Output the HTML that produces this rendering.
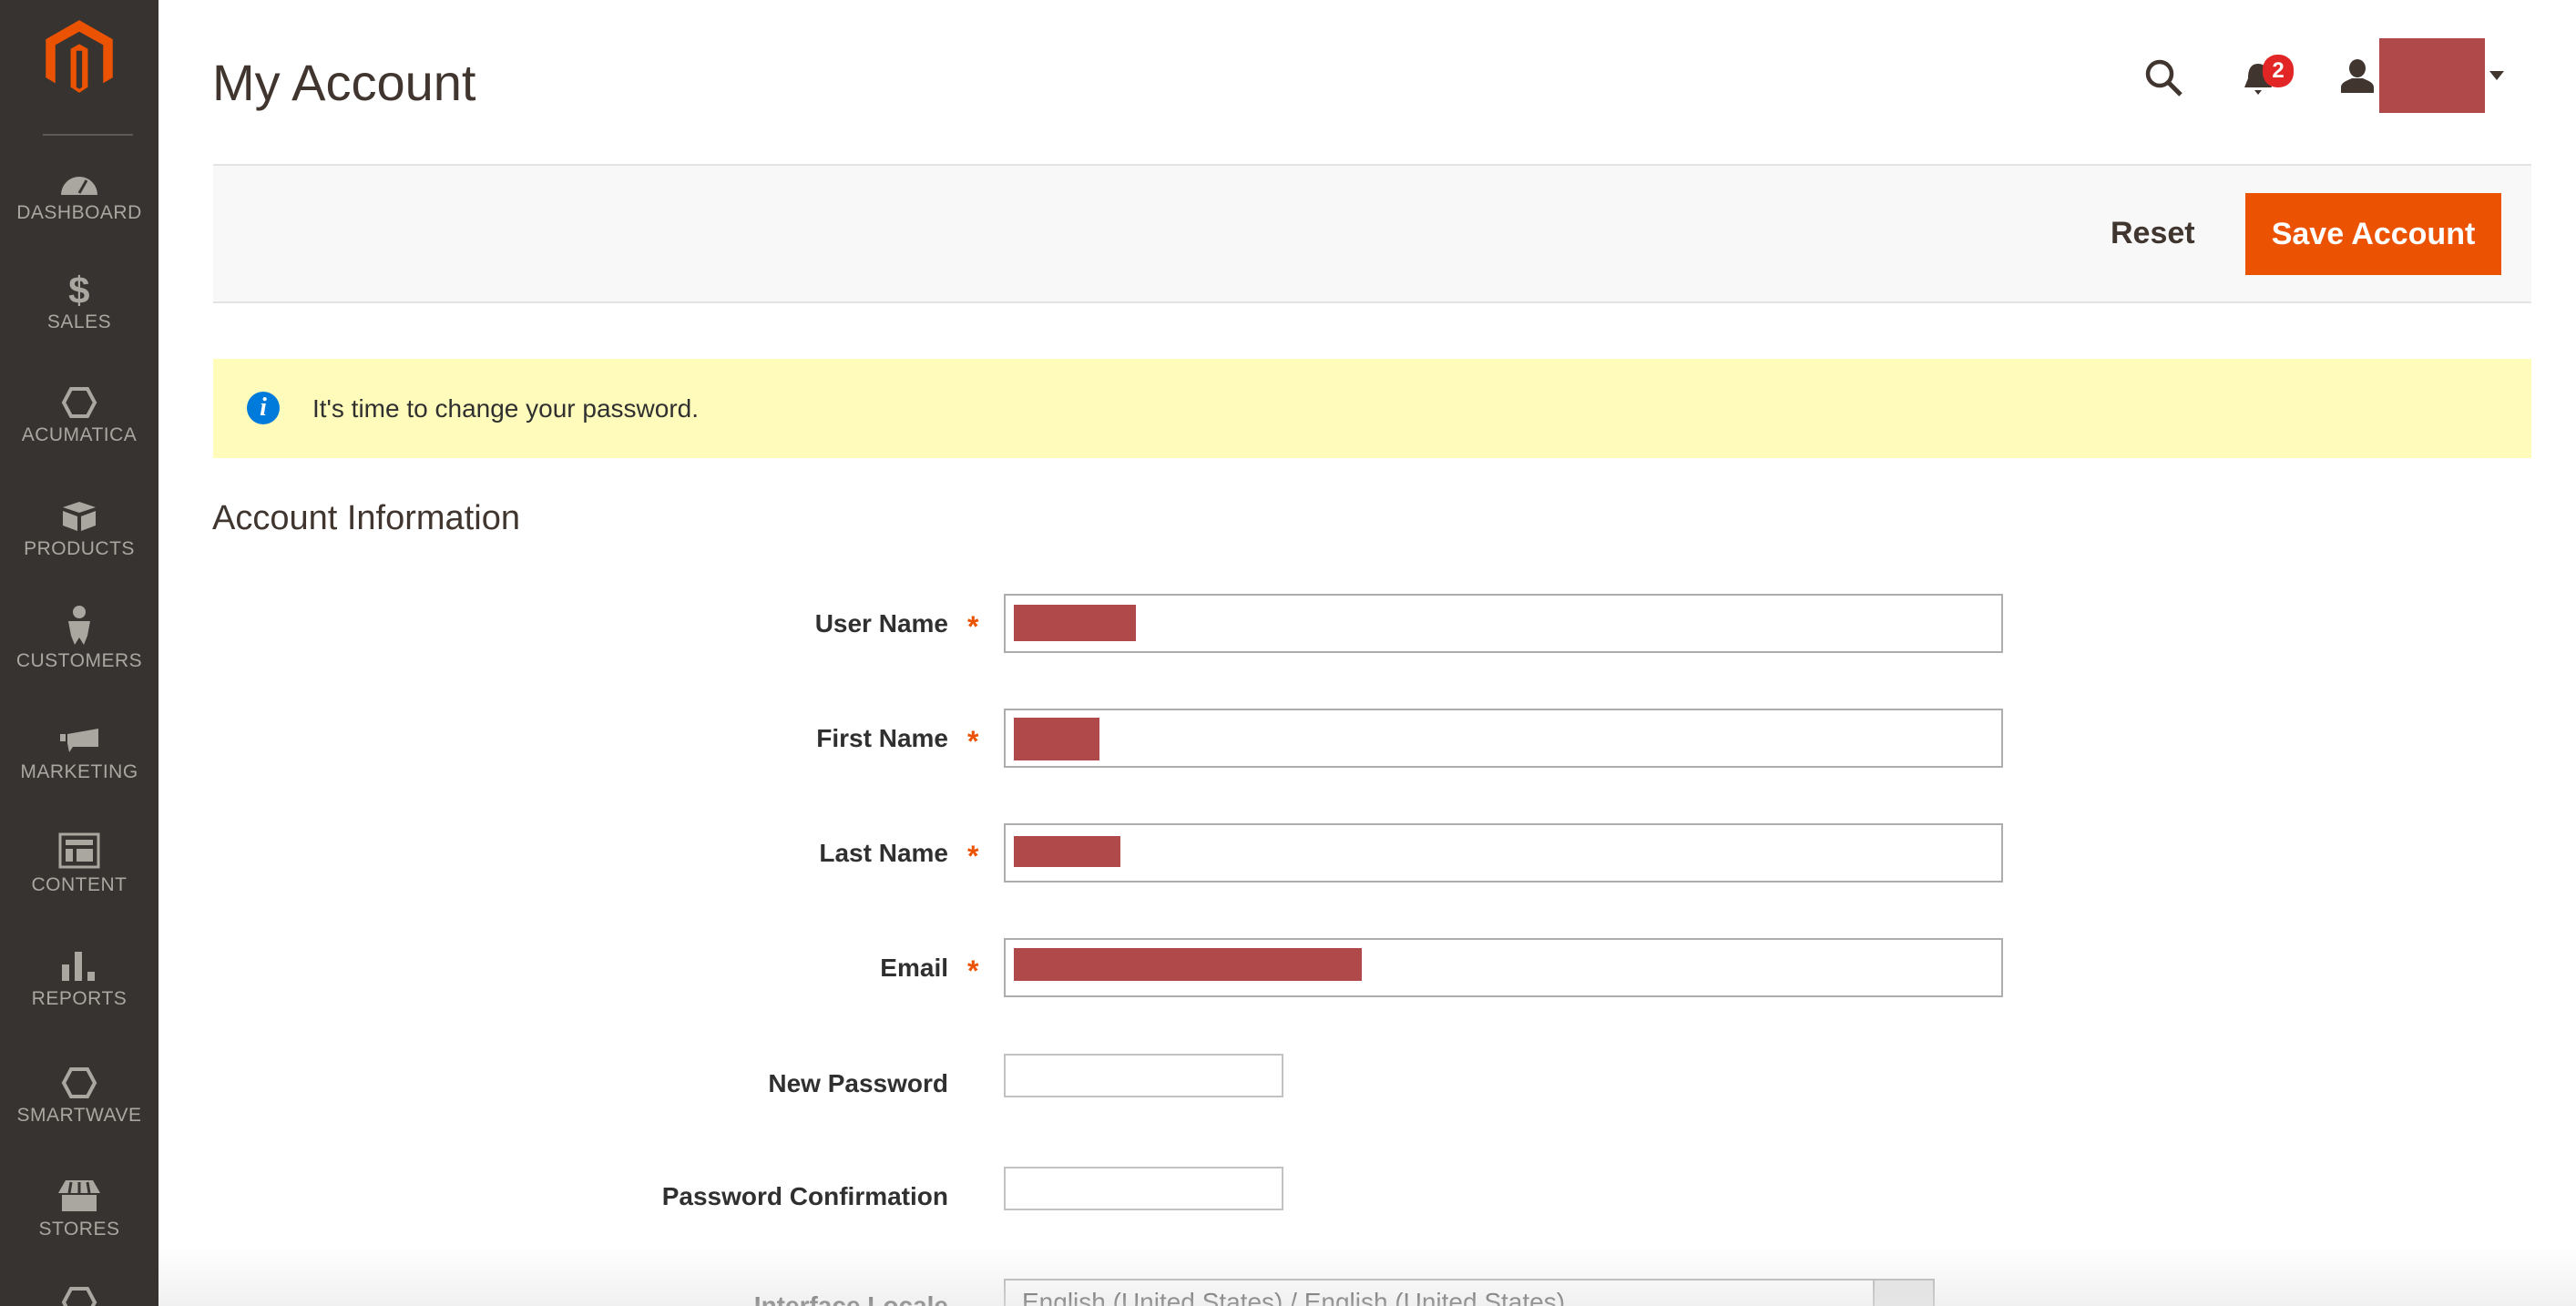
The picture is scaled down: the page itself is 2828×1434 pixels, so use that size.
<!DOCTYPE html>
<html style="width:2828px;height:1434px;overflow:hidden"><head><meta charset="utf-8"><style>
*{margin:0;padding:0;box-sizing:border-box}
body{width:2828px;height:1434px;overflow:hidden;background:#fff;font-family:"Liberation Sans",sans-serif;color:#303030;position:relative}
.a{position:absolute}
#side{left:0;top:0;width:174px;height:1434px;background:#373330;z-index:2;overflow:hidden}
.nav{position:absolute;left:0;width:174px;text-align:center;color:#aaa6a0;font-size:21px;letter-spacing:0.5px}
.nav svg{display:block;margin:0 auto 6px}
.lbl{position:absolute;right:1787px;font-size:28px;font-weight:bold;color:#303030;text-align:right;white-space:nowrap}
.ast{position:absolute;left:1062px;color:#eb5202;font-size:32px;font-weight:bold}
.inp{position:absolute;left:1102px;border:2px solid #adadad;background:#fff}
.red{position:absolute;background:#b04a4a}
</style></head><body>
<div id="side" class="a">
 <svg class="a" style="left:46px;top:20px" width="82" height="84" viewBox="0 0 78 80"><path d="M39 2 L74 22 L74 62 L64 68 L64 28 L39 14 L14 28 L14 68 L4 62 L4 22 Z" fill="#eb5202"/><path d="M30 32 L39 27 L48 32 L48 72 L39 78 L30 72 Z" fill="#eb5202"/><path d="M36 34 L36 72 L39 74 L42 72 L42 34 Z" fill="#373330"/></svg>
 <div class="a" style="left:47px;top:147px;width:99px;height:2px;background:#5e5955"></div>
 <div class="nav" style="top:186px"><svg width="46" height="30" viewBox="0 0 44 30"><path d="M2 28 A20 20 0 0 1 42 28 Z" fill="#aaa6a0"/><path d="M22 26 L30 12" stroke="#373330" stroke-width="3"/></svg>DASHBOARD</div>
 <div class="nav" style="top:298px"><div style="font-size:42px;font-weight:bold;line-height:42px;margin-bottom:2px">$</div>SALES</div>
 <div class="nav" style="top:424px"><svg width="40" height="36" viewBox="0 0 40 36"><path d="M11 3 H29 L37 18 L29 33 H11 L3 18 Z" fill="none" stroke="#aaa6a0" stroke-width="4"/></svg>ACUMATICA</div>
 <div class="nav" style="top:549px"><svg width="40" height="36" viewBox="0 0 40 36"><path d="M2 8 L20 2 L38 8 L20 14 Z M2 12 L18 18 L18 34 L2 28 Z M22 18 L38 12 L38 28 L22 34 Z" fill="#aaa6a0"/></svg>PRODUCTS</div>
 <div class="nav" style="top:664px"><svg width="30" height="44" viewBox="0 0 30 44"><circle cx="15" cy="8" r="7" fill="#aaa6a0"/><path d="M3 18 H27 L24 34 L20 44 L15 36 L10 44 L6 34 Z" fill="#aaa6a0"/></svg>CUSTOMERS</div>
 <div class="nav" style="top:796px"><svg width="46" height="34" viewBox="0 0 46 34"><path d="M2 10 H8 V18 H2 Z M10 10 L44 4 V24 L16 24 L12 30 L10 20 Z" fill="#aaa6a0"/></svg>MARKETING</div>
 <div class="nav" style="top:914px"><svg width="46" height="40" viewBox="0 0 46 40"><rect x="2" y="2" width="42" height="36" fill="none" stroke="#aaa6a0" stroke-width="3"/><rect x="8" y="8" width="30" height="6" fill="#aaa6a0"/><rect x="8" y="18" width="8" height="14" fill="#aaa6a0"/><rect x="20" y="18" width="18" height="14" fill="#aaa6a0"/></svg>CONTENT</div>
 <div class="nav" style="top:1039px"><svg width="46" height="40" viewBox="0 0 46 40"><rect x="4" y="20" width="8" height="18" fill="#aaa6a0"/><rect x="18" y="6" width="8" height="32" fill="#aaa6a0"/><rect x="32" y="28" width="8" height="10" fill="#aaa6a0"/></svg>REPORTS</div>
 <div class="nav" style="top:1171px"><svg width="40" height="36" viewBox="0 0 40 36"><path d="M11 3 H29 L37 18 L29 33 H11 L3 18 Z" fill="none" stroke="#aaa6a0" stroke-width="4"/></svg>SMARTWAVE</div>
 <div class="nav" style="top:1294px"><svg width="50" height="38" viewBox="0 0 50 38"><path d="M10 2 H40 L48 16 H2 Z M6 18 H44 V36 H6 Z" fill="#aaa6a0"/><path d="M16 4 L14 16 M25 4 V16 M34 4 L36 16" stroke="#373330" stroke-width="3"/></svg>STORES</div>
 <svg class="a" style="left:67px;top:1412px" width="40" height="36" viewBox="0 0 40 36"><path d="M11 3 H29 L37 18 L29 33 H11 L3 18 Z" fill="none" stroke="#aaa6a0" stroke-width="4"/></svg>
</div>

<div class="a" style="left:233px;top:58px;font-size:56px;color:#41362f">My Account</div>
<svg class="a" style="left:2354px;top:64px" width="44" height="44" viewBox="0 0 44 44"><circle cx="17" cy="17" r="13" fill="none" stroke="#41362f" stroke-width="4.5"/><path d="M27 27 L40 40" stroke="#41362f" stroke-width="5"/></svg>
<svg class="a" style="left:2462px;top:68px" width="34" height="38" viewBox="0 0 34 38"><path d="M17 2 C8 2 6 10 6 18 L2 28 H32 L28 18 C28 10 26 2 17 2 Z M13 31 H21 L17 36 Z" fill="#41362f"/></svg>
<div class="a" style="left:2484px;top:60px;width:34px;height:36px;border-radius:16px;background:#e22626;color:#fff;font-weight:bold;font-size:24px;text-align:center;line-height:36px">2</div>
<svg class="a" style="left:2568px;top:64px" width="40" height="38" viewBox="0 0 40 38"><ellipse cx="20" cy="11" rx="9" ry="10" fill="#41362f"/><path d="M2 38 V32 C2 26 10 24 14 22 H26 C30 24 38 26 38 32 V38 Z" fill="#41362f"/></svg>
<div class="red" style="left:2612px;top:42px;width:116px;height:82px"></div>
<svg class="a" style="left:2733px;top:78px" width="16" height="10"><path d="M0 0 H16 L8 10 Z" fill="#41362f"/></svg>

<div class="a" style="left:234px;top:180px;width:2545px;height:153px;background:#f8f8f8;border-top:2px solid #e3e3e3;border-bottom:2px solid #e3e3e3"></div>
<div class="a" style="left:2317px;top:237px;font-size:34px;color:#41362f;font-weight:bold">Reset</div>
<div class="a" style="left:2465px;top:212px;width:281px;height:90px;background:#eb5202;color:#fff;font-size:34px;font-weight:bold;text-align:center;line-height:90px">Save Account</div>

<div class="a" style="left:234px;top:394px;width:2545px;height:109px;background:#fffbbb"></div>
<div class="a" style="left:271px;top:430px;width:36px;height:36px;border-radius:50%;background:#007bdb;color:#fff;font-family:'Liberation Serif',serif;font-style:italic;font-weight:bold;font-size:28px;text-align:center;line-height:36px">i</div>
<div class="a" style="left:343px;top:433px;font-size:28px;color:#303030">It's time to change your password.</div>

<div class="a" style="left:233px;top:548px;font-size:38px;color:#41362f">Account Information</div>

<div class="lbl" style="top:669px">User Name</div><div class="ast" style="top:670px">*</div>
<div class="inp" style="top:652px;width:1097px;height:65px"></div><div class="red" style="left:1113px;top:664px;width:134px;height:40px"></div>
<div class="lbl" style="top:795px">First Name</div><div class="ast" style="top:796px">*</div>
<div class="inp" style="top:778px;width:1097px;height:65px"></div><div class="red" style="left:1113px;top:788px;width:94px;height:47px"></div>
<div class="lbl" style="top:921px">Last Name</div><div class="ast" style="top:922px">*</div>
<div class="inp" style="top:904px;width:1097px;height:65px"></div><div class="red" style="left:1113px;top:918px;width:117px;height:34px"></div>
<div class="lbl" style="top:1047px">Email</div><div class="ast" style="top:1048px">*</div>
<div class="inp" style="top:1030px;width:1097px;height:65px"></div><div class="red" style="left:1113px;top:1041px;width:382px;height:36px"></div>
<div class="lbl" style="top:1174px">New Password</div>
<div class="inp" style="top:1157px;width:307px;height:48px;border-color:#c2c2c2"></div>
<div class="lbl" style="top:1298px">Password Confirmation</div>
<div class="inp" style="top:1281px;width:307px;height:48px;border-color:#c2c2c2"></div>
<div class="lbl" style="top:1418px">Interface Locale</div>
<div class="inp" style="top:1404px;width:1022px;height:30px;border-bottom:none;background:#fff"></div>
<div class="a" style="left:1122px;top:1414px;font-size:28px;color:#303030">English (United States) / English (United States)</div>
<div class="a" style="left:2056px;top:1406px;width:66px;height:28px;background:#e3e3e3;border-left:2px solid #adadad"></div>
<div class="a" style="left:174px;top:1370px;width:2654px;height:64px;background:linear-gradient(rgba(255,255,255,0),rgba(230,230,230,0.6))"></div>
</body></html>
